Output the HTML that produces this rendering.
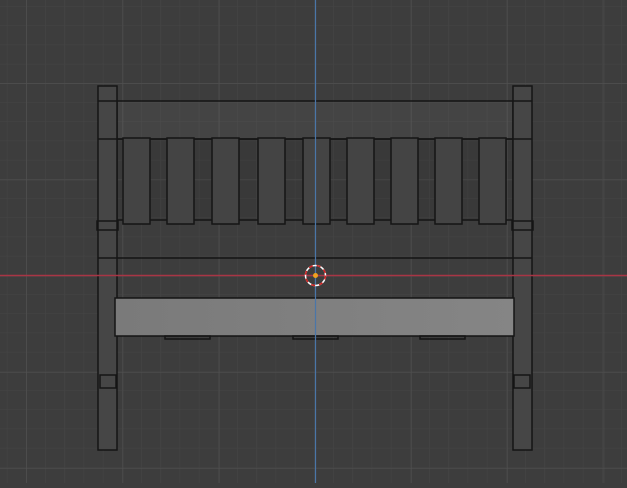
<!DOCTYPE html><html><head><style>html,body{margin:0;padding:0;background:#3d3d3d;overflow:hidden}</style></head><body>
<svg width="627" height="483" xmlns="http://www.w3.org/2000/svg">
<defs>
<pattern id="mn" x="26" y="83" width="19.2" height="19.2" patternUnits="userSpaceOnUse"><path d="M0 0H19.2M0 0V19.2" stroke="#454545" stroke-width="1" fill="none"/></pattern>
<pattern id="mj" x="26.5" y="83.5" width="96.2" height="96.2" patternUnits="userSpaceOnUse"><path d="M0 0H96.2M0 0V96.2" stroke="#525252" stroke-width="1" fill="none"/></pattern>
<linearGradient id="sg" x1="0" x2="1"><stop offset="0" stop-color="#7a7a7a"/><stop offset="1" stop-color="#858585"/></linearGradient>
</defs>
<rect width="627" height="483" fill="#3d3d3d"/>
<rect width="627" height="483" fill="url(#mn)"/>
<rect width="627" height="483" fill="url(#mj)"/>
<g stroke="#151515" stroke-width="1.5" fill="none">
<rect x="117" y="101" width="396" height="38" fill="rgba(255,255,255,0.04)"/>
<rect x="117" y="139" width="396" height="81" fill="rgba(0,0,0,0.06)"/>
<line x1="117" y1="258" x2="513" y2="258"/>
<g fill="#444">
<rect x="123" y="138" width="27" height="86"/><rect x="167" y="138" width="27" height="86"/><rect x="212" y="138" width="27" height="86"/><rect x="258" y="138" width="27" height="86"/><rect x="303" y="138" width="27" height="86"/><rect x="347" y="138" width="27" height="86"/><rect x="391" y="138" width="27" height="86"/><rect x="435" y="138" width="27" height="86"/><rect x="479" y="138" width="27" height="86"/>
</g>
<rect x="98" y="86" width="19" height="364" fill="#464646"/>
<rect x="513" y="86" width="19" height="364" fill="#464646"/>
<rect x="97" y="221" width="21" height="9"/><rect x="512" y="221" width="21" height="9"/>
<rect x="100" y="375" width="16" height="13"/><rect x="514" y="375" width="16" height="13"/>
<line x1="98" y1="101" x2="117" y2="101"/><line x1="98" y1="139" x2="117" y2="139"/><line x1="513" y1="101" x2="532" y2="101"/><line x1="513" y1="139" x2="532" y2="139"/>
<line x1="98" y1="258" x2="117" y2="258"/><line x1="513" y1="258" x2="532" y2="258"/>
<rect x="115" y="298" width="399" height="38" fill="url(#sg)"/>
<rect x="165" y="336" width="45" height="3"/><rect x="293" y="336" width="45" height="3"/><rect x="420" y="336" width="45" height="3"/>
</g>
<line x1="0" y1="275.5" x2="627" y2="275.5" stroke="#a83545" stroke-width="1.5"/>
<line x1="315.5" y1="0" x2="315.5" y2="483" stroke="#4a76a8" stroke-width="1.2"/>
<circle cx="315.5" cy="275.5" r="10" fill="none" stroke="#fff" stroke-width="1.5"/>
<circle cx="315.5" cy="275.5" r="10" fill="none" stroke="#d02020" stroke-width="1.5" stroke-dasharray="4 4"/>
<circle cx="315.5" cy="275.5" r="2.5" fill="#f0a020"/>
</svg></body></html>
